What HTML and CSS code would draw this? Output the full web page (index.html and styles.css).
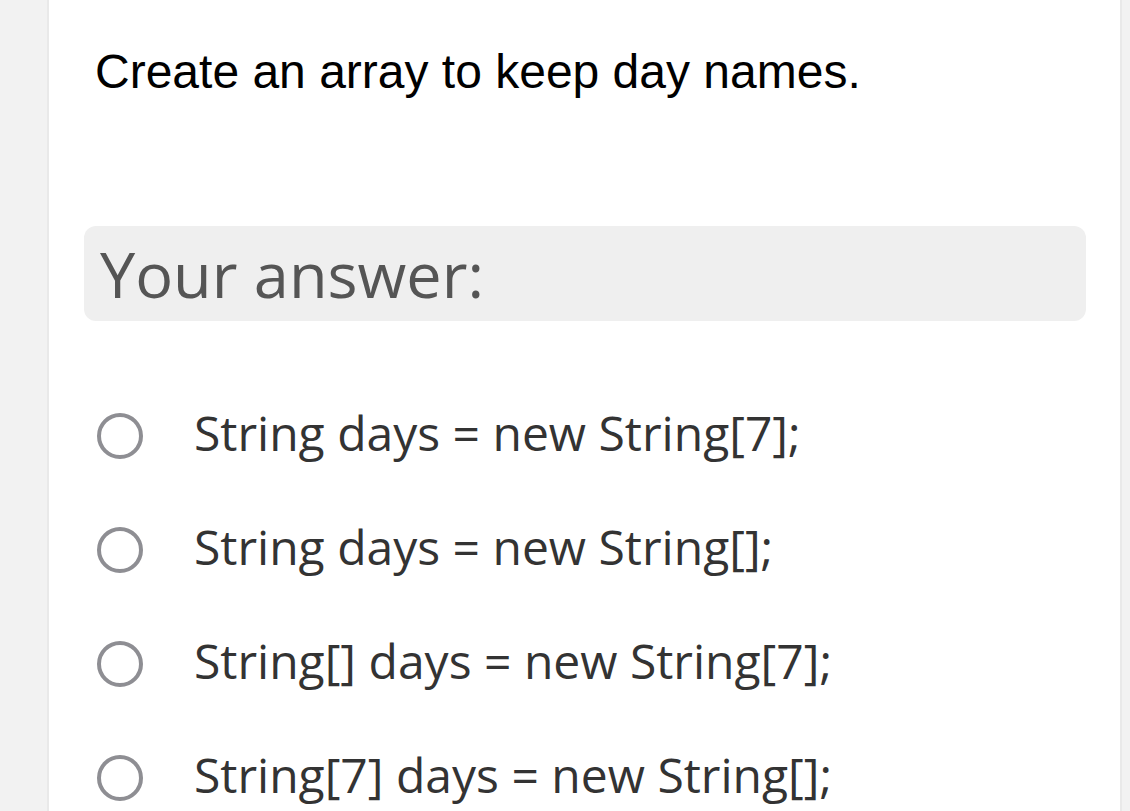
FILE: index.html
```html
<!DOCTYPE html>
<html lang="en">
<head>
<meta charset="utf-8">
<title>Quiz</title>
<link rel="stylesheet" href="styles.css">
</head>
<body>
<main class="card">
  <p class="question">Create an array to keep day names.</p>
  <div class="answer-label">Your answer:</div>
  <ul class="options">
    <li class="option"><span class="radio"></span><span class="option-text">String days = new String[7];</span></li>
    <li class="option"><span class="radio"></span><span class="option-text">String days = new String[];</span></li>
    <li class="option"><span class="radio"></span><span class="option-text">String[] days = new String[7];</span></li>
    <li class="option"><span class="radio"></span><span class="option-text">String[7] days = new String[];</span></li>
  </ul>
</main>
</body>
</html>
```

FILE: styles.css
```css
html, body {
  margin: 0;
  padding: 0;
  background: #f2f2f2;
  height: 100%;
  overflow: hidden;
}

.card {
  box-sizing: border-box;
  margin-left: 47px;
  width: 1075px;
  min-height: 811px;
  background: #ffffff;
  border-left: 2px solid #e9e9e9;
  border-right: 2px solid #e9e9e9;
  padding: 44px 34px 0 35px;
}

.question {
  margin: 0 0 126px 0;
  padding-left: 11px;
  font-family: "Liberation Sans", Arial, sans-serif;
  font-size: 48px;
  line-height: 56px;
  color: #000000;
}

.answer-label {
  background: #efefef;
  border-radius: 12px;
  padding: 4px 16px;
  font-family: "Open Sans", sans-serif;
  font-size: 63px;
  line-height: 87px;
  color: #555555;
}

.options {
  list-style: none;
  margin: 79px 0 0 0;
  padding: 0 0 0 13px;
  display: flex;
  flex-direction: column;
  gap: 48px;
}

.option {
  display: flex;
  align-items: center;
  gap: 51px;
  height: 66px;
}

.radio {
  box-sizing: border-box;
  flex: none;
  width: 46px;
  height: 46px;
  border: 4px solid #8e8e93;
  border-radius: 50%;
  margin-top: 6px;
}

.option-text {
  font-family: "Open Sans", sans-serif;
  font-size: 48px;
  line-height: 66px;
  color: #333333;
  white-space: nowrap;
}
```
